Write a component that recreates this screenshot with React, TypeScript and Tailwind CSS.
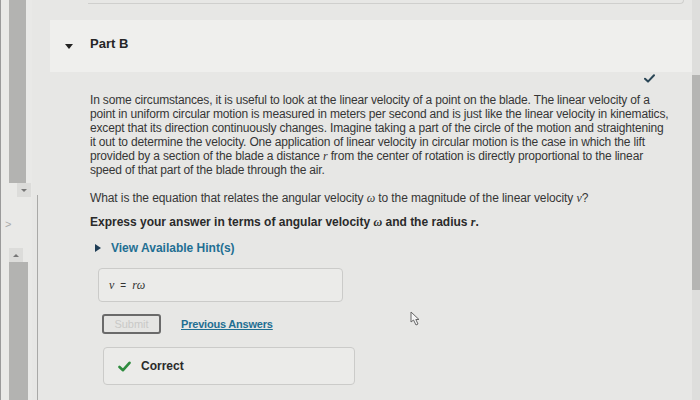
import React from "react";

const para = [
  "In some circumstances, it is useful to look at the linear velocity of a point on the blade. The linear velocity of a",
  "point in uniform circular motion is measured in meters per second and is just like the linear velocity in kinematics,",
  "except that its direction continuously changes. Imagine taking a part of the circle of the motion and straightening",
  "it out to determine the velocity. One application of linear velocity in circular motion is the case in which the lift",
];

const M = ({ children }: { children: React.ReactNode }) => (
  <span className="italic" style={{ fontFamily: '"Liberation Serif", serif' }}>{children}</span>
);

export default function App() {
  return (
    <div className="w-[700px] h-[400px] flex bg-[#e7e7e5] overflow-hidden relative" style={{ fontFamily: '"Liberation Sans", Arial, sans-serif' }}>
      {/* left scrollbars */}
      <div className="w-[32px] h-full flex flex-col shrink-0 bg-[#e9e9e7] border-l border-[#9a9a9a]">
        <div className="ml-[8px] w-[17px] h-[183px] bg-[#b3b3b1]" />
        <div className="ml-[16px] w-[14px] h-[14px] bg-[#dcdcda] flex items-center justify-center">
          <div className="w-0 h-0 border-l-[3px] border-r-[3px] border-t-[3px] border-l-transparent border-r-transparent border-t-[#777]" />
        </div>
        <div className="h-[22px]" />
        <div className="ml-[4px] text-[#aaa] text-[11px] leading-none">&gt;</div>
        <div className="h-[18px]" />
        <div className="ml-[8px] w-[14px] h-[14px] bg-[#dcdcda] flex items-center justify-center">
          <div className="w-0 h-0 border-l-[3px] border-r-[3px] border-b-[3px] border-l-transparent border-r-transparent border-b-[#777]" />
        </div>
        <div className="ml-[8px] w-[19px] flex-1 bg-[#b3b3b1]" />
      </div>
      <div className="w-[6px] h-full flex flex-col shrink-0">
        <div className="h-[195px]" />
        <div className="flex-1 border-r border-[#a9a9a7]" />
      </div>
      {/* main */}
      <div className="flex-1 flex flex-col relative">
        <div className="h-[4px] ml-[50px] mr-[8px] border-b border-r border-[#cfcfcd] rounded-br-[4px]" />
        <div className="mt-[16px] ml-[12px] h-[52px] bg-[#efefed] flex items-center">
          <div className="ml-[15px] w-0 h-0 border-l-[4px] border-r-[4px] border-t-[5px] border-l-transparent border-r-transparent border-t-[#222]" />
          <div className="ml-[17px] text-[13px] font-bold text-[#262626] -mt-[4px]">Part B</div>
        </div>
        <div className="ml-[52px] mr-[20px] relative">
          <div className="absolute right-[17px] top-[2px] text-[#2a4656]">
            <svg width="11" height="9" viewBox="0 0 11 9"><path d="M1 4.8 L4 7.6 L10 1.3" fill="none" stroke="currentColor" strokeWidth="2" strokeLinecap="round" strokeLinejoin="round" /></svg>
          </div>
          <div className="pt-[21px] text-[12px] leading-[14px] text-[#363636] whitespace-nowrap tracking-[-0.17px]">
            {para.map((l) => (<div key={l}>{l}</div>))}
            <div>provided by a section of the blade a distance <M>r</M> from the center of rotation is directly proportional to the linear</div>
            <div>speed of that part of the blade through the air.</div>
          </div>
          <div className="mt-[14px] text-[12px] leading-[14px] text-[#363636] tracking-[-0.1px]">
            What is the equation that relates the angular velocity <M>ω</M> to the magnitude of the linear velocity <M>v</M>?
          </div>
          <div className="mt-[10px] text-[12px] leading-[14px] font-bold text-[#2a2a2a]">
            Express your answer in terms of angular velocity <M>ω</M> and the radius <M>r</M>.
          </div>
          <div className="mt-[12px] flex items-center text-[12px] leading-[14px] font-bold text-[#1f6f93]">
            <div className="ml-[5px] w-0 h-0 border-t-[4px] border-b-[4px] border-l-[6px] border-t-transparent border-b-transparent border-l-[#1e3d55]" />
            <span className="ml-[10px]">View Available Hint(s)</span>
          </div>
          <div className="mt-[13px] ml-[8px] w-[245px] h-[34px] border border-[#cbcbc9] rounded-[4px] bg-[#ebebe9] flex items-center px-[10px] text-[12px] text-[#333]">
            <M>v</M><span className="mx-[6px] text-[10px]">=</span><M>rω</M>
          </div>
          <div className="mt-[12px] ml-[12px] flex items-center">
            <div className="w-[59px] h-[20px] border-2 border-[#6a6a6a] rounded-[3px] flex items-center justify-center text-[11px] text-[#c9c9c7] bg-[#e5e5e3]">Submit</div>
            <div className="ml-[20px] text-[11px] font-bold text-[#1f6f93] underline tracking-[-0.2px]">Previous Answers</div>
          </div>
          <div className="mt-[13px] ml-[13px] w-[252px] h-[38px] border border-[#cbcbc9] rounded-[4px] bg-[#ebebe9] flex items-center">
            <svg className="ml-[14px]" width="13" height="11" viewBox="0 0 13 11"><path d="M1.5 6 L5 9.2 L11.5 1.8" fill="none" stroke="#2e8b3e" strokeWidth="2.6" strokeLinecap="round" strokeLinejoin="round" /></svg>
            <span className="ml-[10px] text-[12px] font-bold text-[#2a2a2a]">Correct</span>
          </div>
        </div>
        <svg className="absolute left-[372px] top-[311px]" width="12" height="16" viewBox="0 0 12 16">
          <path d="M1 1 L1 11 L3.5 9 L6 14 L8 13 L5.8 8.5 L9 8.5 Z" fill="#f5f5f5" stroke="#666" strokeWidth="1" strokeLinejoin="round" />
        </svg>
      </div>
      {/* right scrollbar */}
      <div className="w-[8px] h-full flex flex-col shrink-0 bg-[#dededc]">
        <div className="h-[75px]" />
        <div className="h-[215px] bg-[#b5b5b3]" />
      </div>
    </div>
  );
}
